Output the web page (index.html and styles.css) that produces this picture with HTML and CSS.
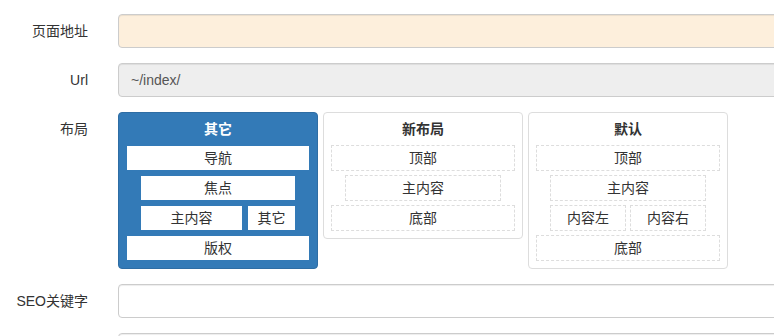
FILE: index.html
```html
<!DOCTYPE html>
<html lang="zh">
<head>
    <meta charset="UTF-8">
    <title>页面设置</title>
    <link rel="stylesheet" href="styles.css">
</head>
<body>
    <form class="form">
        <div class="row">
            <label class="row-label">页面地址</label>
            <div class="row-field"><input class="input input-warn" type="text"></div>
        </div>
        <div class="row">
            <label class="row-label">Url</label>
            <div class="row-field"><input class="input" type="text" value="~/index/" readonly></div>
        </div>
        <div class="row">
            <label class="row-label">布局</label>
            <div class="row-field layouts">
                <!-- 当前选中的布局 -->
                <div class="layout active">
                    <div class="layout-title">其它</div>
                    <div class="cell">导航</div>
                    <div class="cell inset">焦点</div>
                    <div class="cell-row inset">
                        <div class="cell wide">主内容</div>
                        <div class="cell narrow">其它</div>
                    </div>
                    <div class="cell">版权</div>
                </div>
                <div class="layout">
                    <div class="layout-title">新布局</div>
                    <div class="cell">顶部</div>
                    <div class="cell inset">主内容</div>
                    <div class="cell">底部</div>
                </div>
                <div class="layout">
                    <div class="layout-title">默认</div>
                    <div class="cell">顶部</div>
                    <div class="cell inset">主内容</div>
                    <div class="cell-row inset">
                        <div class="cell half">内容左</div>
                        <div class="cell half">内容右</div>
                    </div>
                    <div class="cell">底部</div>
                </div>
            </div>
        </div>
        <div class="row">
            <label class="row-label">SEO关键字</label>
            <div class="row-field"><input class="input" type="text"></div>
        </div>
        <div class="row">
            <label class="row-label"></label>
            <div class="row-field"><input class="input" type="text"></div>
        </div>
    </form>
</body>
</html>
```

FILE: styles.css
```css
html, body {
    overflow: hidden;
}

body {
    margin: 0;
    background: #fff;
    color: #333;
    font-family: "Liberation Sans", "Noto Sans CJK SC", sans-serif;
    font-size: 14px;
    line-height: 20px;
}

.form {
    width: 1000px;
    padding-top: 14px;
}

.row {
    display: flex;
    margin-bottom: 15px;
}

.row-label {
    width: 88px;
    flex-shrink: 0;
    padding-top: 7px;
    text-align: right;
}

.row-field {
    flex: 1;
    margin-left: 30px;
}

.input {
    display: block;
    box-sizing: border-box;
    width: 100%;
    height: 34px;
    padding: 6px 12px;
    border: 1px solid #ccc;
    border-radius: 4px;
    background: #fff;
    color: #555;
    font-family: inherit;
    font-size: 14px;
    box-shadow: inset 0 1px 1px rgba(0,0,0,0.075);
}

.input[readonly] {
    background: #eee;
}

.input-warn {
    background: #fdefdc;
}

.layouts {
    display: flex;
    align-items: flex-start;
    gap: 5px;
}

.layout {
    box-sizing: border-box;
    width: 200px;
    padding: 6px 7px 7px;
    border: 1px solid #ddd;
    border-radius: 4px;
    background: #fff;
    text-align: center;
}

.layout-title {
    font-weight: bold;
    line-height: 20px;
    margin-bottom: 6px;
}

.cell {
    box-sizing: border-box;
    height: 26px;
    line-height: 24px;
    border: 1px dashed #ddd;
    margin-top: 4px;
}

.layout-title + .cell {
    margin-top: 0;
}

.inset {
    margin-left: 14px;
    margin-right: 14px;
}

.cell-row {
    display: flex;
    gap: 4px;
    margin-top: 4px;
}

.cell-row .cell {
    margin-top: 0;
}

.half {
    flex: 1;
}

.wide {
    width: 103px;
}

.narrow {
    flex: 1;
}

.layout.active {
    background: #337ab7;
    border-color: #2e6da4;
}

.layout.active .layout-title {
    color: #fff;
}

.layout.active .cell {
    background: #fff;
    border: 1px solid #337ab7;
}
```
